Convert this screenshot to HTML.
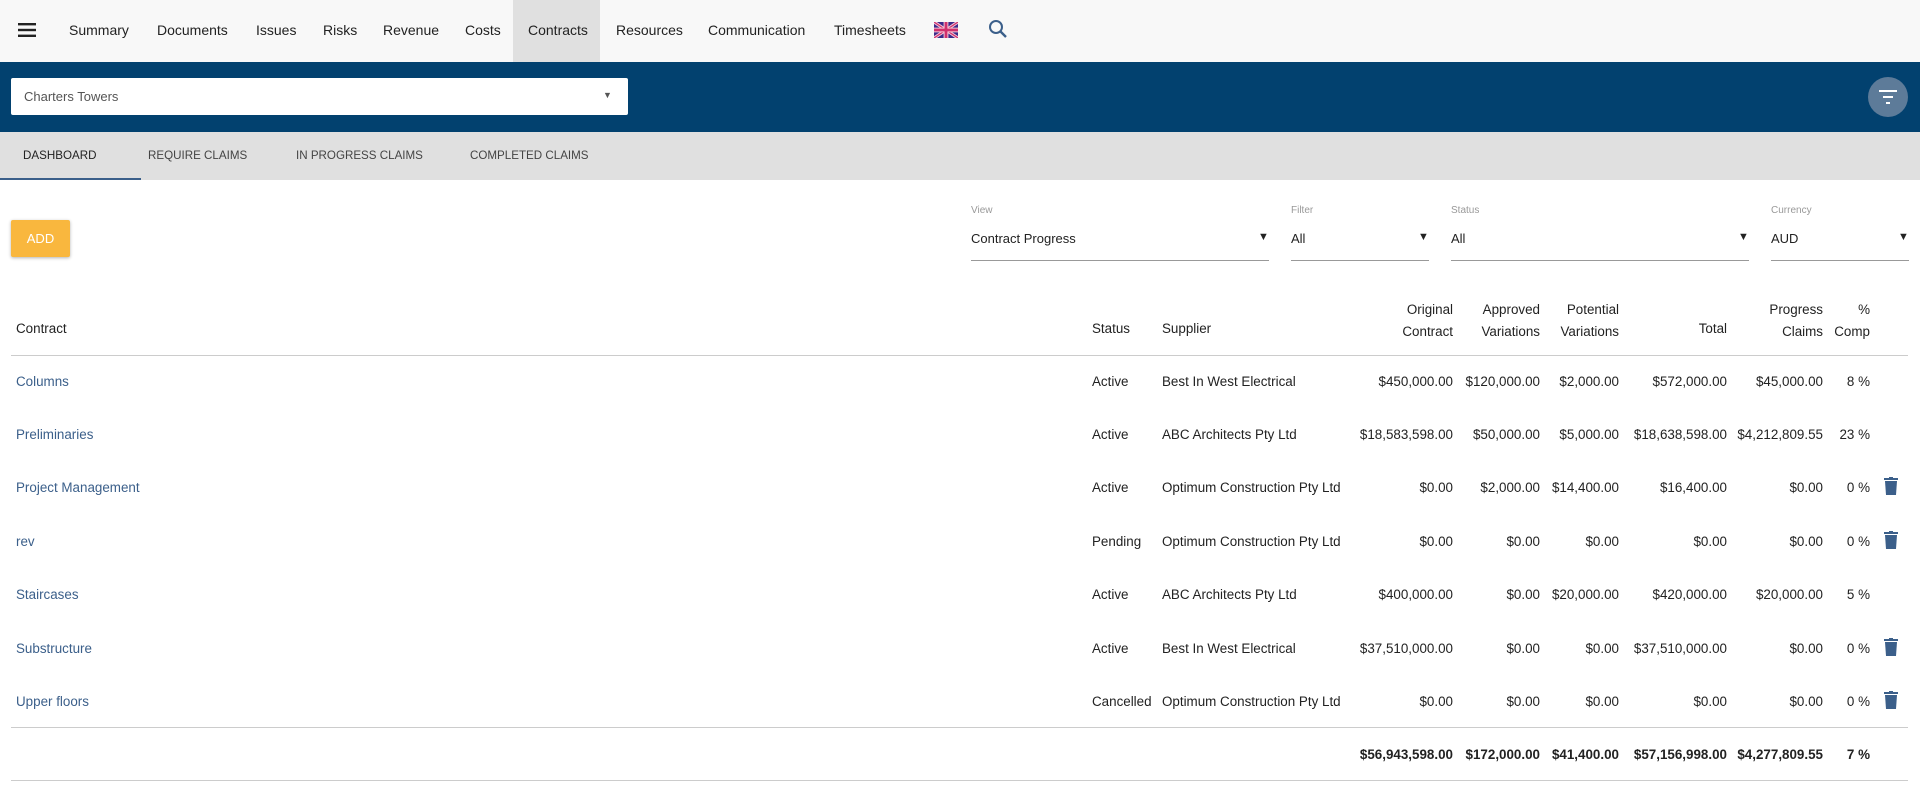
<!DOCTYPE html>
<html><head><meta charset="utf-8"><style>
*{box-sizing:border-box;margin:0;padding:0}
body{width:1920px;height:805px;overflow:hidden;background:#fff;font-family:"Liberation Sans",sans-serif;color:#222;position:relative;font-size:13.4px}
.a{position:absolute;white-space:nowrap}
.nav{position:absolute;left:0;top:0;width:1920px;height:62px;background:#f8f8f8}
.nav .a{top:22px;font-size:14px;color:#222}
.blue{position:absolute;left:0;top:62px;width:1920px;height:70px;background:#02416f}
.tabs{position:absolute;left:0;top:132px;width:1920px;height:48px;background:#e0e0e0}
.tabs .a{top:17px;font-size:11.6px;color:#444}
.lbl{font-size:10px;color:#999;top:205px}
.val{font-size:13px;top:231px}
.ul{position:absolute;height:1px;background:#999;top:260px}
.r{text-align:right}
.link{color:#3b5f8a}
.hr{position:absolute;left:11px;width:1897px;height:1px;background:#ccc}
</style></head><body>
<div class="nav">
<svg class="a" style="left:18px;top:23px" width="18" height="14"><rect y="0" width="18" height="2.4" fill="#222"/><rect y="5.8" width="18" height="2.4" fill="#222"/><rect y="11.6" width="18" height="2.4" fill="#222"/></svg>
<div class="a" style="left:513px;top:0;width:87px;height:62px;background:#e0e0e0"></div>
<span class="a" style="left:69px">Summary</span>
<span class="a" style="left:157px">Documents</span>
<span class="a" style="left:256px">Issues</span>
<span class="a" style="left:323px">Risks</span>
<span class="a" style="left:383px">Revenue</span>
<span class="a" style="left:465px">Costs</span>
<span class="a" style="left:528px">Contracts</span>
<span class="a" style="left:616px">Resources</span>
<span class="a" style="left:708px">Communication</span>
<span class="a" style="left:834px">Timesheets</span>
<svg class="a" style="left:934px;top:22px" width="24" height="16" viewBox="0 0 60 40"><rect width="60" height="40" fill="#3b2a8a"/><path d="M0,0L60,40M60,0L0,40" stroke="#f3c6d6" stroke-width="8"/><path d="M0,0L60,40M60,0L0,40" stroke="#d0306e" stroke-width="3"/><path d="M30,0V40M0,20H60" stroke="#f3c6d6" stroke-width="12"/><path d="M30,0V40M0,20H60" stroke="#d0306e" stroke-width="7"/></svg>
<svg class="a" style="left:988px;top:19px" width="20" height="20" viewBox="0 0 20 20"><circle cx="8" cy="8" r="6" fill="none" stroke="#3b5f8a" stroke-width="2"/><path d="M12.5,12.5L18,18" stroke="#3b5f8a" stroke-width="2.4"/></svg>
</div>
<div class="blue">
<div class="a" style="left:11px;top:16px;width:617px;height:37px;background:#fff;border-radius:2px"></div>
<span class="a" style="left:24px;top:27px;font-size:13px;color:#555">Charters Towers</span>
<span class="a" style="left:603px;top:28px;font-size:9px;color:#555">▼</span>
<div class="a" style="left:1868px;top:15px;width:40px;height:40px;border-radius:50%;background:#5d7b99"></div>
<svg class="a" style="left:1878px;top:27px" width="20" height="16"><rect x="1" y="1" width="18" height="2" fill="#fff"/><rect x="5" y="7" width="10" height="2" fill="#fff"/><rect x="8" y="13" width="4" height="2" fill="#fff"/></svg>
</div>
<div class="tabs">
<span class="a" style="left:23px;color:#222">DASHBOARD</span>
<span class="a" style="left:148px">REQUIRE CLAIMS</span>
<span class="a" style="left:296px">IN PROGRESS CLAIMS</span>
<span class="a" style="left:470px">COMPLETED CLAIMS</span>
<div class="a" style="left:0;top:46px;width:141px;height:2px;background:#3b5f8a"></div>
</div>
<div class="a" style="left:11px;top:220px;width:59px;height:37px;background:#f9b73e;border-radius:2px;box-shadow:0 1px 3px rgba(0,0,0,.3);color:#fff;font-size:13px;text-align:center;line-height:37px">ADD</div>
<span class="a lbl" style="left:971px">View</span><span class="a val" style="left:971px">Contract Progress</span><span class="a" style="left:1258px;top:231px;font-size:11px">▼</span><div class="ul" style="left:971px;width:298px"></div>
<span class="a lbl" style="left:1291px">Filter</span><span class="a val" style="left:1291px">All</span><span class="a" style="left:1418px;top:231px;font-size:11px">▼</span><div class="ul" style="left:1291px;width:138px"></div>
<span class="a lbl" style="left:1451px">Status</span><span class="a val" style="left:1451px">All</span><span class="a" style="left:1738px;top:231px;font-size:11px">▼</span><div class="ul" style="left:1451px;width:298px"></div>
<span class="a lbl" style="left:1771px">Currency</span><span class="a val" style="left:1771px">AUD</span><span class="a" style="left:1898px;top:231px;font-size:11px">▼</span><div class="ul" style="left:1771px;width:138px"></div>

<span class="a" style="left:16px;top:321px">Contract</span>
<span class="a" style="left:1092px;top:321px">Status</span>
<span class="a" style="left:1162px;top:321px">Supplier</span>
<span class="a r" style="right:467px;top:299px;line-height:22px">Original<br>Contract</span>
<span class="a r" style="right:380px;top:299px;line-height:22px">Approved<br>Variations</span>
<span class="a r" style="right:301px;top:299px;line-height:22px">Potential<br>Variations</span>
<span class="a r" style="right:193px;top:321px">Total</span>
<span class="a r" style="right:97px;top:299px;line-height:22px">Progress<br>Claims</span>
<span class="a r" style="right:50px;top:299px;line-height:22px">%<br>Comp</span>
<div class="hr" style="top:355px"></div>

<div id="rows"></div>
<div class="hr" style="top:727px"></div>
<div class="hr" style="top:780px"></div>
<script>
var d=[["Columns","Active","Best In West Electrical","$450,000.00","$120,000.00","$2,000.00","$572,000.00","$45,000.00","8 %",0],
["Preliminaries","Active","ABC Architects Pty Ltd","$18,583,598.00","$50,000.00","$5,000.00","$18,638,598.00","$4,212,809.55","23 %",0],
["Project Management","Active","Optimum Construction Pty Ltd","$0.00","$2,000.00","$14,400.00","$16,400.00","$0.00","0 %",1],
["rev","Pending","Optimum Construction Pty Ltd","$0.00","$0.00","$0.00","$0.00","$0.00","0 %",1],
["Staircases","Active","ABC Architects Pty Ltd","$400,000.00","$0.00","$20,000.00","$420,000.00","$20,000.00","5 %",0],
["Substructure","Active","Best In West Electrical","$37,510,000.00","$0.00","$0.00","$37,510,000.00","$0.00","0 %",1],
["Upper floors","Cancelled","Optimum Construction Pty Ltd","$0.00","$0.00","$0.00","$0.00","$0.00","0 %",1]];
var ys=[374,427,480,534,587,641,694],R=[467,380,301,193,97,50],h="";
function cells(r,y,b){var s="";for(var i=0;i<6;i++)s+='<span class="a r" style="right:'+R[i]+'px;top:'+y+'px;'+(b?'font-weight:bold':'')+'">'+r[i]+'</span>';return s}
d.forEach(function(r,k){var y=ys[k];h+='<span class="a link" style="left:16px;top:'+y+'px">'+r[0]+'</span><span class="a" style="left:1092px;top:'+y+'px">'+r[1]+'</span><span class="a" style="left:1162px;top:'+y+'px">'+r[2]+'</span>'+cells(r.slice(3),y);
if(r[9])h+='<svg class="a" style="left:1884px;top:'+(y-3)+'px" width="14" height="18" viewBox="0 0 14 18"><rect x="0" y="1" width="14" height="2" fill="#3b5f8a"/><rect x="5" y="0" width="4" height="2" fill="#3b5f8a"/><path d="M1,4H13L12,18H2Z" fill="#3b5f8a"/></svg>';});
h+=cells(["$56,943,598.00","$172,000.00","$41,400.00","$57,156,998.00","$4,277,809.55","7 %"],747,1);
document.getElementById("rows").innerHTML=h;
</script>
</body></html>
